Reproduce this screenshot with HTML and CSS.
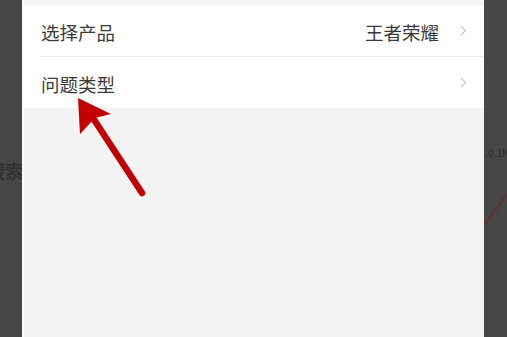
FILE: index.html
```html
<!DOCTYPE html>
<html lang="zh-CN">
<head>
<meta charset="utf-8">
<title>反馈</title>
<link rel="stylesheet" href="styles.css">
</head>
<body>
<div class="screen">
  <div class="side side-left">
    <div class="bg-search">搜索</div>
  </div>
  <div class="panel">
    <div class="list">
      <div class="row row-first">
        <span class="label">选择产品</span>
        <span class="value">王者荣耀</span>
        <svg class="chev" width="7" height="11" viewBox="0 0 7 11"><path d="M1 1 L5.5 5.5 L1 10" fill="none" stroke="#c9c9c9" stroke-width="1.2"/></svg>
      </div>
      <div class="row">
        <span class="label">问题类型</span>
        <span class="value"></span>
        <svg class="chev" width="7" height="11" viewBox="0 0 7 11"><path d="M1 1 L5.5 5.5 L1 10" fill="none" stroke="#c9c9c9" stroke-width="1.2"/></svg>
      </div>
    </div>
  </div>
  <div class="side side-right">
    <div class="bg-count">1.0.1K</div>
    <svg class="bg-line" width="23" height="60" viewBox="0 0 23 60"><line x1="0" y1="53" x2="26" y2="16" stroke="#5c3535" stroke-width="2.5"/></svg>
  </div>
  <svg class="annotation" width="507" height="337" viewBox="0 0 507 337">
    <line x1="91" y1="115" x2="142" y2="193" stroke="#c20000" stroke-width="6.5" stroke-linecap="round"/>
    <polygon points="78,98 111,114 95,118 80,134" fill="#c20000"/>
  </svg>
</div>
</body>
</html>
```
FILE: styles.css
```css
html, body {
  margin: 0;
  padding: 0;
}
body {
  width: 507px;
  height: 337px;
  overflow: hidden;
  background: #474747;
  font-family: "Noto Sans CJK SC", "Noto Sans", sans-serif;
}
.screen {
  position: relative;
  display: flex;
  width: 507px;
  height: 337px;
}
.side {
  overflow: hidden;
  background: #474747;
}
.side-left {
  width: 22px;
  display: flex;
  justify-content: flex-end;
  align-items: flex-start;
}
.bg-search {
  margin-top: 157px;
  margin-right: -1px;
  font-size: 18px;
  line-height: 26px;
  font-weight: 700;
  color: #313131;
  white-space: nowrap;
  flex-shrink: 0;
}
.side-right {
  width: 23px;
  display: flex;
  flex-direction: column;
}
.bg-count {
  margin-top: 147px;
  margin-left: -4px;
  font-family: "Liberation Sans", sans-serif;
  font-size: 10px;
  line-height: 14px;
  color: #2e2e2e;
  white-space: nowrap;
}
.bg-line {
  margin-top: 12px;
  display: block;
}
.panel {
  width: 460px;
  border-left: 2px solid #fbfbfb;
  background: #f3f3f3;
  padding-top: 5px;
}
.list {
  background: #fff;
}
.row {
  display: flex;
  align-items: center;
  height: 51px;
  margin-left: 16px;
  padding-left: 1px;
  padding-right: 17px;
  color: #3a3a3a;
  font-size: 18.5px;
}
.row-first {
  border-bottom: 1px solid #ececec;
}
.label {
  flex: 1;
  padding-top: 2px;
}
.value {
  margin-right: 21px;
  padding-top: 2px;
}
.chev {
  display: block;
}
.annotation {
  position: absolute;
  left: 0;
  top: 0;
  pointer-events: none;
}
```
